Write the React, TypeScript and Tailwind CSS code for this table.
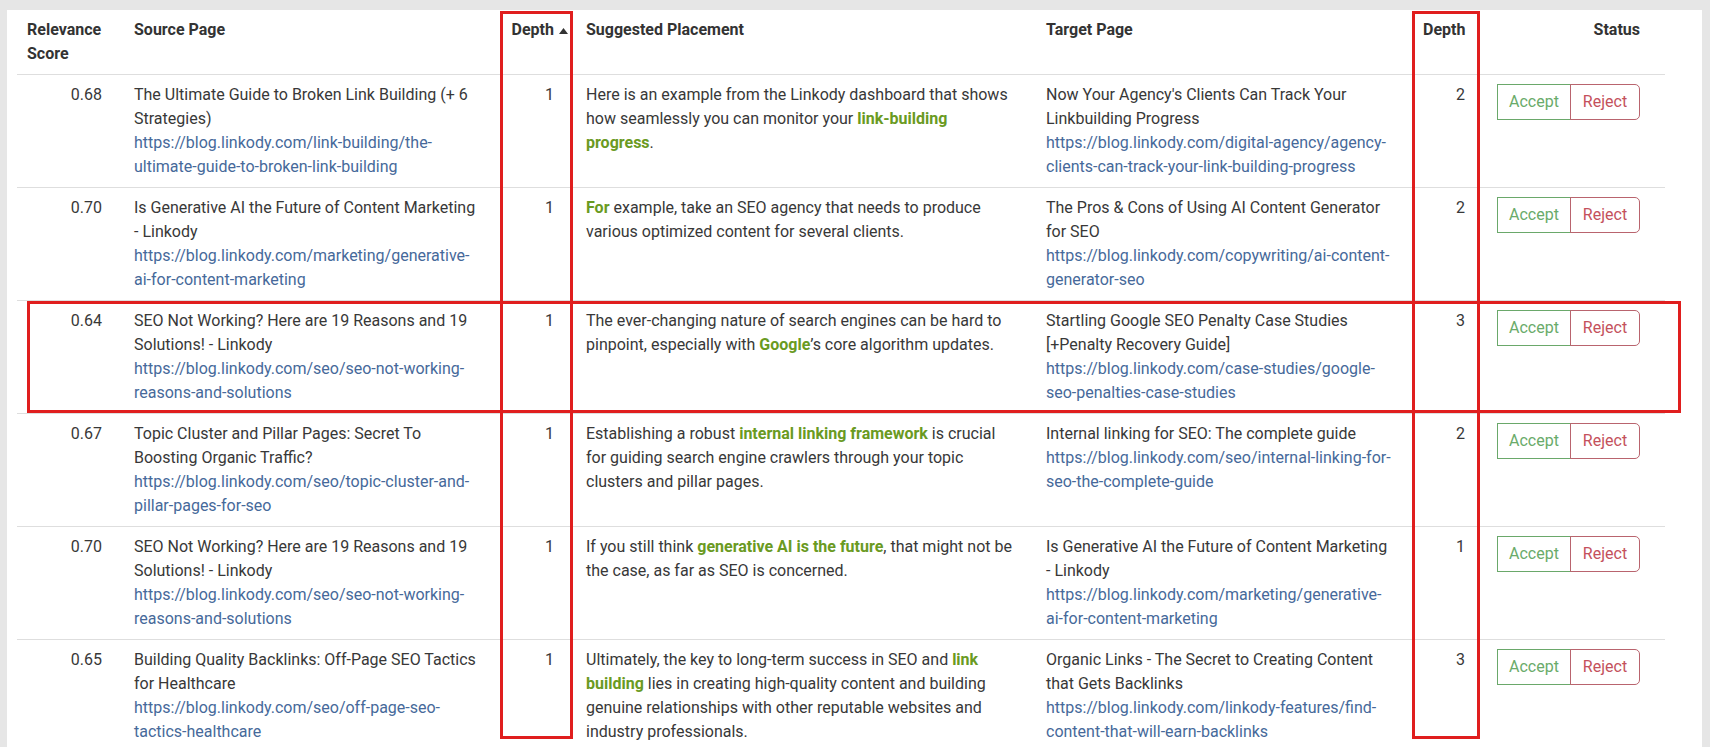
import React from "react";

type Row = {
  score: string;
  source: string;
  sourceUrl: string;
  sourceDepth: number;
  placement: React.ReactNode;
  target: string;
  targetUrl: string;
  targetDepth: number;
};

const G = ({ children }: { children: React.ReactNode }) => (
  <span className="font-bold text-[#6a9a22]">{children}</span>
);

const rows: Row[] = [
  {
    score: "0.68",
    source: "The Ultimate Guide to Broken Link Building (+ 6 Strategies)",
    sourceUrl: "https://blog.linkody.com/link-building/the-ultimate-guide-to-broken-link-building",
    sourceDepth: 1,
    placement: (
      <>
        Here is an example from the Linkody dashboard that shows how seamlessly you can monitor your{" "}
        <G>link-building progress</G>.
      </>
    ),
    target: "Now Your Agency's Clients Can Track Your Linkbuilding Progress",
    targetUrl: "https://blog.linkody.com/digital-agency/agency-clients-can-track-your-link-building-progress",
    targetDepth: 2,
  },
  {
    score: "0.70",
    source: "Is Generative AI the Future of Content Marketing - Linkody",
    sourceUrl: "https://blog.linkody.com/marketing/generative-ai-for-content-marketing",
    sourceDepth: 1,
    placement: (
      <>
        <G>For</G> example, take an SEO agency that needs to produce various optimized content for several clients.
      </>
    ),
    target: "The Pros & Cons of Using AI Content Generator for SEO",
    targetUrl: "https://blog.linkody.com/copywriting/ai-content-generator-seo",
    targetDepth: 2,
  },
  {
    score: "0.64",
    source: "SEO Not Working? Here are 19 Reasons and 19 Solutions! - Linkody",
    sourceUrl: "https://blog.linkody.com/seo/seo-not-working-reasons-and-solutions",
    sourceDepth: 1,
    placement: (
      <>
        The ever-changing nature of search engines can be hard to pinpoint, especially with <G>Google</G>’s core
        algorithm updates.
      </>
    ),
    target: "Startling Google SEO Penalty Case Studies [+Penalty Recovery Guide]",
    targetUrl: "https://blog.linkody.com/case-studies/google-seo-penalties-case-studies",
    targetDepth: 3,
  },
  {
    score: "0.67",
    source: "Topic Cluster and Pillar Pages: Secret To Boosting Organic Traffic?",
    sourceUrl: "https://blog.linkody.com/seo/topic-cluster-and-pillar-pages-for-seo",
    sourceDepth: 1,
    placement: (
      <>
        Establishing a robust <G>internal linking framework</G> is crucial for guiding search engine crawlers through
        your topic clusters and pillar pages.
      </>
    ),
    target: "Internal linking for SEO: The complete guide",
    targetUrl: "https://blog.linkody.com/seo/internal-linking-for-seo-the-complete-guide",
    targetDepth: 2,
  },
  {
    score: "0.70",
    source: "SEO Not Working? Here are 19 Reasons and 19 Solutions! - Linkody",
    sourceUrl: "https://blog.linkody.com/seo/seo-not-working-reasons-and-solutions",
    sourceDepth: 1,
    placement: (
      <>
        If you still think <G>generative AI is the future</G>, that might not be the case, as far as SEO is concerned.
      </>
    ),
    target: "Is Generative AI the Future of Content Marketing - Linkody",
    targetUrl: "https://blog.linkody.com/marketing/generative-ai-for-content-marketing",
    targetDepth: 1,
  },
  {
    score: "0.65",
    source: "Building Quality Backlinks: Off-Page SEO Tactics for Healthcare",
    sourceUrl: "https://blog.linkody.com/seo/off-page-seo-tactics-healthcare",
    sourceDepth: 1,
    placement: (
      <>
        Ultimately, the key to long-term success in SEO and <G>link building</G> lies in creating high-quality content
        and building genuine relationships with other reputable websites and industry professionals.
      </>
    ),
    target: "Organic Links - The Secret to Creating Content that Gets Backlinks",
    targetUrl: "https://blog.linkody.com/linkody-features/find-content-that-will-earn-backlinks",
    targetDepth: 3,
  },
];

const PageCell = ({ title, url }: { title: string; url: string }) => (
  <td className="px-4 pt-2 pb-2 align-top">
    <div>{title}</div>
    <a href="#" className="block text-[#46699a]">
      {url}
    </a>
  </td>
);

export default function App() {
  return (
    <div
      className="relative min-h-screen bg-[#e6e6e6] pt-[10px] pl-[7px] pr-2 text-[16px] leading-6 text-[#383838]"
      style={{ fontFamily: "Roboto, 'Liberation Sans', sans-serif" }}
    >
      <div className="bg-white pl-[10px] pb-4">
        <table className="table-fixed border-collapse w-[1648px]">
          <colgroup>
            <col className="w-[101px]" />
            <col className="w-[376px]" />
            <col className="w-[76px]" />
            <col className="w-[460px]" />
            <col className="w-[377px]" />
            <col className="w-[74px]" />
            <col className="w-[184px]" />
          </colgroup>
          <thead>
            <tr className="border-b border-[#dedede] text-[#333]">
              <th className="pl-[10px] pr-4 pt-2 pb-2 text-left align-top font-bold">Relevance Score</th>
              <th className="px-4 pt-2 pb-2 text-left align-top font-bold">Source Page</th>
              <th className="px-4 pt-2 pb-2 text-right align-top font-bold">
                <span className="relative">
                  Depth
                  <svg className="absolute -right-[14px] top-[8px]" width="9" height="6" viewBox="0 0 9 6">
                    <path d="M4.5 0L9 6H0z" fill="#333" />
                  </svg>
                </span>
              </th>
              <th className="px-4 pt-2 pb-2 text-left align-top font-bold">Suggested Placement</th>
              <th className="px-4 pt-2 pb-2 text-left align-top font-bold">Target Page</th>
              <th className="px-4 pt-2 pb-2 text-right align-top font-bold">Depth</th>
              <th className="pl-4 pr-[25px] pt-2 pb-2 text-right align-top font-bold">Status</th>
            </tr>
          </thead>
          <tbody>
            {rows.map((r, i) => (
              <tr key={i} className="border-b border-[#dedede]">
                <td className="pl-[10px] pr-4 pt-2 pb-2 text-right align-top">{r.score}</td>
                <PageCell title={r.source} url={r.sourceUrl} />
                <td className="px-4 pt-2 pb-2 text-right align-top">{r.sourceDepth}</td>
                <td className="px-4 pt-2 pb-2 align-top">{r.placement}</td>
                <PageCell title={r.target} url={r.targetUrl} />
                <td className="px-4 pt-2 pb-2 text-right align-top">{r.targetDepth}</td>
                <td className="pl-4 pr-[25px] pt-[9px] pb-2 align-top">
                  <div className="flex">
                    <button className="h-9 w-[74px] border border-[#6aa86a] text-[#6aab6a]">Accept</button>
                    <button className="h-9 w-[70px] -ml-px rounded-r-[5px] border border-[#b9646e] text-[#c4515c]">
                      Reject
                    </button>
                  </div>
                </td>
              </tr>
            ))}
          </tbody>
        </table>
      </div>

      {/* red annotation boxes */}
      <div className="pointer-events-none absolute left-[500px] top-[11px] h-[728px] w-[73px] border-[3px] border-[#e01e1e]" />
      <div className="pointer-events-none absolute left-[1412px] top-[11px] h-[728px] w-[68px] border-[3px] border-[#e01e1e]" />
      <div className="pointer-events-none absolute left-[27px] top-[301px] h-[112px] w-[1654px] border-[3px] border-[#e01e1e]" />
    </div>
  );
}
